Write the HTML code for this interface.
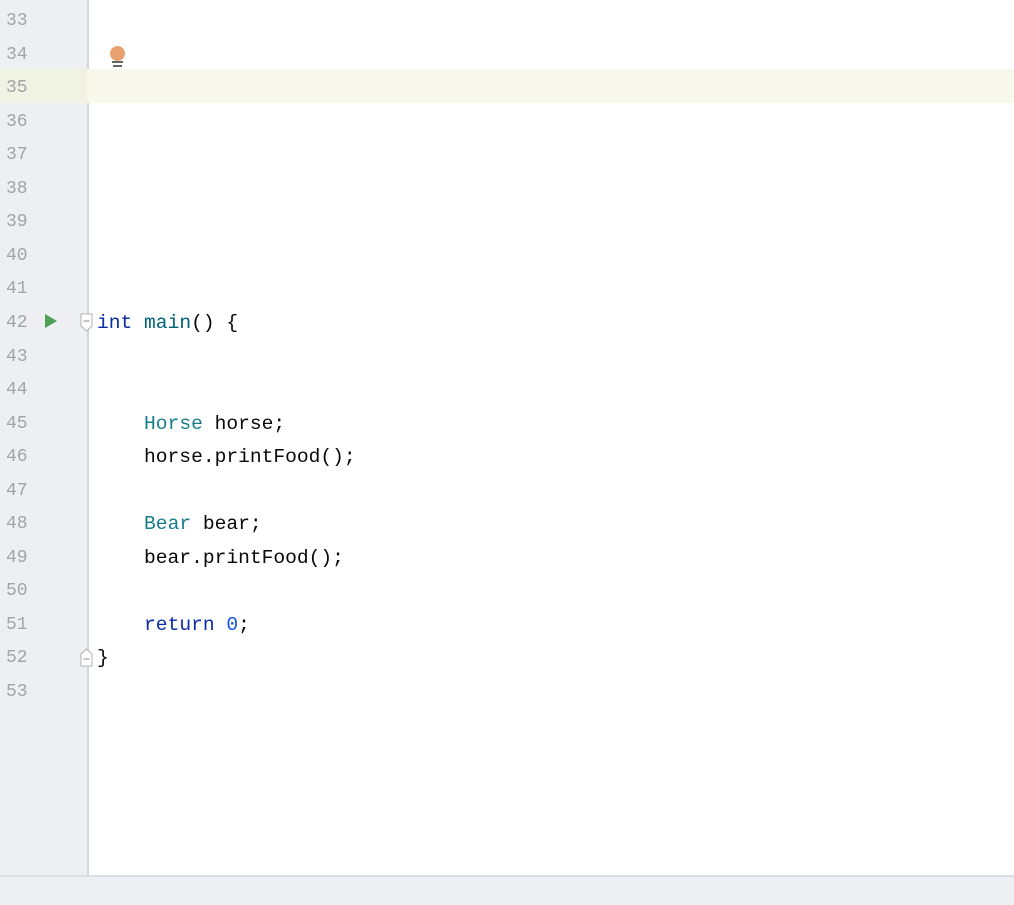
<!DOCTYPE html><html><head><style>
body{margin:0;width:1014px;height:905px;background:#fff;position:relative;overflow:hidden;font-family:"Liberation Mono",monospace;font-size:19.6px}
.g{position:absolute;left:0;top:0;width:89px;height:875px;background:#eeeff2;border-right:2px solid #d5d6d9;box-sizing:border-box}
.bot{position:absolute;left:0;top:875px;width:1014px;height:30px;background:#eeeff2;border-top:2px solid #dcdde0;box-sizing:border-box}
.hl{position:absolute;left:0;top:69px;width:1014px;height:34px;background:#f8f9ec}
.hl .gg{width:87px;height:34px;background:#f0f2e4}
.r{position:absolute;height:33.55px;line-height:33.55px;white-space:pre}
.n{left:6px;color:#a3a4a8;font-size:18px}
.c{left:97px;color:#080808}
.k{color:#0b2aa8}.t{color:#177e89}.f{color:#00627a}.num{color:#1750eb}
</style></head><body>
<div class="g"></div><div class="hl"><div class="gg"></div></div><div class="bot"></div>
<div id="L"></div>
<div style="position:absolute;left:110px;top:46px;width:15px;height:15px;border-radius:50%;background:#e8a070"></div>
<div style="position:absolute;left:112px;top:61px;width:11px;height:2px;background:#666"></div>
<div style="position:absolute;left:113px;top:65px;width:9px;height:2px;background:#666"></div>
<svg style="position:absolute;left:44px;top:313px" width="14" height="16"><path d="M1 1L13 8L1 15Z" fill="#4d9f5a"/></svg>
<svg style="position:absolute;left:80px;top:313px" width="14" height="20"><path d="M1 1H12V13L6.5 18L1 13Z" fill="#fff" stroke="#b0b0b0"/><path d="M3.5 8H9.5" stroke="#888"/></svg>
<svg style="position:absolute;left:80px;top:647px" width="14" height="20"><path d="M1 19H12V7L6.5 2L1 7Z" fill="#fff" stroke="#b0b0b0"/><path d="M3.5 12H9.5" stroke="#888"/></svg>
<script>
var code={42:'<span class="k">int</span> <span class="f">main</span>() {',45:'    <span class="t">Horse</span> horse;',46:'    horse.printFood();',48:'    <span class="t">Bear</span> bear;',49:'    bear.printFood();',51:'    <span class="k">return</span> <span class="num">0</span>;',52:'}'};
var h='';for(var n=33;n<=53;n++){var y=5+(n-33)*33.55;h+='<div class="r n" style="top:'+y+'px">'+n+'</div>';if(code[n])h+='<div class="r c" style="top:'+y+'px">'+code[n]+'</div>';}
document.getElementById('L').innerHTML=h;
</script>
</body></html>
